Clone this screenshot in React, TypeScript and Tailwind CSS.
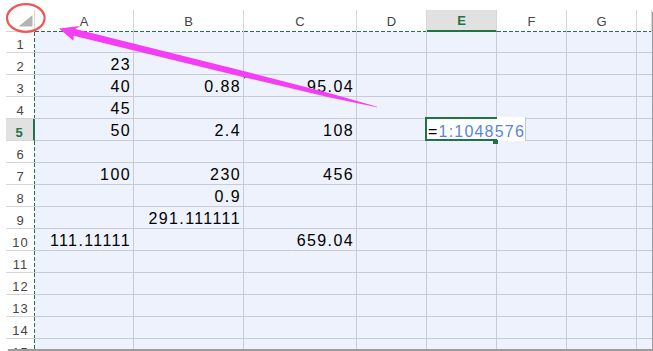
import React from "react";

const COLS = ["A", "B", "C", "D", "E", "F", "G", "H"];
const ROWS = Array.from({ length: 15 }, (_, i) => i + 1);

// values as shown in the sheet (all right aligned numbers)
const DATA: Record<number, Record<string, string>> = {
  2: { A: "23" },
  3: { A: "40", B: "0.88", C: "95.04" },
  4: { A: "45" },
  5: { A: "50", B: "2.4", C: "108" },
  7: { A: "100", B: "230", C: "456" },
  8: { B: "0.9" },
  9: { B: "291.111111" },
  10: { A: "111.11111", C: "659.04" },
};

// marching ants of the copied range: drawn as a dashed strip on the header edges
const colHead =
  "flex items-center justify-center bg-white bg-[image:repeating-linear-gradient(90deg,#217346_0px_4px,#ffffff_4px_6px)] bg-[length:100%_1px] bg-bottom bg-no-repeat border-r border-r-[#d6d6d6] text-[13px] leading-none text-[#444]";
const colHeadActive =
  "flex items-center justify-center bg-[#e1e1e1] border-r border-r-[#d6d6d6] border-b-2 border-b-[#217346] text-[13px] leading-none font-bold text-[#217346]";
const rowHead =
  "flex items-end justify-center pb-[1px] bg-white bg-[image:repeating-linear-gradient(180deg,#217346_0px_4px,#ffffff_4px_6px)] bg-[length:1px_100%] bg-right bg-no-repeat border-b border-b-[#d6d6d6] text-[13px] leading-none tracking-[1px] text-[#444]";
const rowHeadActive =
  "flex items-end justify-center pb-[1px] bg-[#e1e1e1] border-b border-b-[#d6d6d6] border-r-2 border-r-[#217346] text-[13px] leading-none tracking-[1px] font-bold text-[#217346]";
const cell =
  "relative flex items-end justify-end pr-[2px] pb-[1px] bg-[#eef2fc] border-r border-b border-[#c7cbd5] text-[16px] leading-none tracking-[1.4px] text-black whitespace-nowrap";
const cellLast = "relative bg-[#eef2fc] border-b border-[#c7cbd5]";

function ArrowOverlay() {
  const tip = { x: 59, y: 28.5 };
  const dx = 318;
  const dy = 78.5;
  const L = Math.hypot(dx, dy);
  const ux = dx / L;
  const uy = dy / L;
  const pt = (t: number, w: number) =>
    `${(tip.x + ux * t - uy * w).toFixed(1)},${(tip.y + uy * t + ux * w).toFixed(1)}`;
  const points = [
    `${tip.x},${tip.y}`,
    pt(20, -7.5),
    pt(16, -3.5),
    pt(L * 0.6, -2.9),
    pt(L * 0.85, -2.1),
    pt(L, -0.3),
    pt(L, 0.3),
    pt(L * 0.85, 2.1),
    pt(L * 0.6, 2.9),
    pt(16, 3.5),
    pt(17, 8.5),
  ].join(" ");

  return (
    <svg className="pointer-events-none absolute left-0 top-0 z-30" width={653} height={351}>
      <ellipse cx={25.8} cy={18} rx={18.8} ry={13.8} fill="none" stroke="#f05656" strokeWidth={2.2} />
      <polygon points={points} fill="#f53df5" />
    </svg>
  );
}

export default function App() {
  return (
    <div className="relative h-[351px] w-[653px] overflow-hidden bg-white pl-[6px] pt-[10px] font-['Liberation_Sans',Arial,sans-serif]">
      <div className="h-[339px] w-[646px] overflow-hidden shadow-[2px_2px_1px_#9c9c9c]">
        <div className="grid grid-cols-[29px_99px_110px_113px_70px_70px_70px_70px_15px] grid-rows-[22px_21px_repeat(14,22px)]">
          {/* corner */}
          <div className="relative bg-white border-r border-b border-[#d6d6d6]">
            <svg className="absolute left-0 top-0" width={28} height={21}>
              <polygon points="12.5,16.5 26.5,16.5 26.5,5" fill="#b4b4b4" />
            </svg>
          </div>
          {COLS.map((c) => (
            <div key={c} className={c === "E" ? colHeadActive : colHead}>
              {c === "H" ? "" : c}
            </div>
          ))}

          {ROWS.map((r) => (
            <React.Fragment key={r}>
              <div className={r === 5 ? rowHeadActive : rowHead}>{r}</div>
              {COLS.map((c) => {
                if (c === "H") return <div key={c} className={cellLast} />;
                const v = DATA[r]?.[c];
                return (
                  <div key={c} className={cell}>
                    {v}
                    {r === 3 && c === "C" && (
                      <span className="absolute left-0 top-0 h-0 w-0 border-t-[4px] border-r-[4px] border-t-[#217346] border-r-transparent" />
                    )}
                    {r === 5 && c === "E" && (
                      <>
                        <div className="absolute left-[-2px] top-[-2px] z-10 flex h-[24px] w-[101px] items-end border-r border-r-[#c6c6c6] bg-white pb-[1px] pl-[3px] text-[16px] leading-none tracking-[1.2px]">
                          <span className="text-black">=</span>
                          <span className="text-[#5585e0]">1:1048576</span>
                        </div>
                        <div className="absolute left-[-2px] top-[-2px] z-20 h-[24px] w-[72px] border-t-2 border-l-2 border-b-2 border-[#217346]" />
                        <div className="absolute left-[66px] top-[21px] z-20 h-[4px] w-[5px] bg-[#217346]" />
                      </>
                    )}
                  </div>
                );
              })}
            </React.Fragment>
          ))}
        </div>
      </div>
      <ArrowOverlay />
    </div>
  );
}
